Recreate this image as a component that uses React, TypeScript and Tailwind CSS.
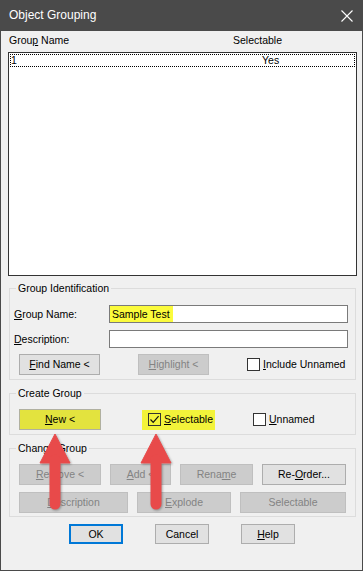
import React from 'react';

const Btn = ({ children, disabled, className = '' }: any) => (
  <div
    className={`h-[21px] flex items-center justify-center border ${
      disabled ? 'bg-[#cccccc] border-[#bfbfbf] text-[#838383]' : 'bg-[#e1e1e1] border-[#adadad] text-black'
    } ${className}`}
  >
    <span>{children}</span>
  </div>
);

const Box = ({ checked = false }: any) => (
  <span className={`w-[13px] h-[13px] border border-[#333333] flex items-center justify-center shrink-0 ${checked ? '' : 'bg-white'}`}>
    {checked && (
      <svg width="11" height="11" viewBox="0 0 11 11">
        <path d="M1.5 5.5 L4.2 8.3 L9.6 2.2" stroke="#111" strokeWidth="1.2" fill="none" />
      </svg>
    )}
  </span>
);

const GroupBox = ({ title, className = '', children }: any) => (
  <fieldset className={`ml-[8px] w-[347px] border border-[#dcdcdc] ${className}`}>
    <legend className="ml-[6px] px-[2px] leading-[13px]">{title}</legend>
    {children}
  </fieldset>
);

const U = ({ children }: any) => <span className="underline underline-offset-[1px]">{children}</span>;

export default function App() {
  return (
    <div className="relative w-[363px] h-[571px] overflow-hidden bg-[#f0f0f0] border-x border-b border-[#4a4a4a] font-['Liberation_Sans',Arial,sans-serif] text-[10.5px] leading-[13px] text-black">
      {/* title bar */}
      <div className="h-[31px] bg-[#4a4a4a] flex items-center justify-between pl-[8px] pr-[9px] text-white text-[12px]">
        <span>Object Grouping</span>
        <svg width="12" height="12" viewBox="0 0 12 12">
          <path d="M0.5 0.5 L11.5 11.5 M11.5 0.5 L0.5 11.5" stroke="#ffffff" strokeWidth="1.1" />
        </svg>
      </div>

      {/* list header */}
      <div className="mt-[3px] flex h-[13px]">
        <div className="w-[232px] pl-[8px]">Grou<U>p</U> Name</div>
        <div>Selectable</div>
      </div>

      {/* list */}
      <div className="ml-[7px] mt-[5px] w-[349px] h-[224px] border border-[#333333] bg-white">
        <div className="ml-[1px] mt-[1px] w-[345px] h-[13px] border border-dotted border-black flex items-center">
          <div className="w-[251px]">1</div>
          <div>Yes</div>
        </div>
      </div>

      <GroupBox title="Group Identification" className="mt-[6px] pb-[4px]">
        <div className="mt-[10px] flex items-center h-[18px]">
          <div className="w-[99px] pl-[4px]"><U>G</U>roup Name:</div>
          <div className="w-[239px] h-[18px] border border-[#7a7a7a] bg-white flex">
            <span className="h-full bg-[#fbfb3c] pl-[2px] pr-[3px] flex items-center">Sample Test</span>
          </div>
        </div>
        <div className="mt-[7px] flex items-center h-[18px]">
          <div className="w-[99px] pl-[4px]"><U>D</U>escription:</div>
          <div className="w-[239px] h-[18px] border border-[#7a7a7a] bg-white" />
        </div>
        <div className="mt-[6px] flex items-center">
          <Btn className="ml-[9px] w-[81px]"><U>F</U>ind Name &lt;</Btn>
          <Btn disabled className="ml-[38px] w-[71px]"><U>H</U>ighlight &lt;</Btn>
          <span className="ml-[38px]"><Box /></span>
          <span className="ml-[3px]"><U>I</U>nclude Unnamed</span>
        </div>
      </GroupBox>

      <GroupBox title="Create Group" className="mt-[7px] pb-[4px]">
        <div className="mt-[9px] flex items-center">
          <Btn className="ml-[9px] w-[82px] !bg-[#e3e33e] !border-[#b0b0a0]"><U>N</U>ew &lt;</Btn>
          <div className="ml-[41px] w-[73px] h-[20px] bg-[#f3f33a] flex items-center pl-[6px]">
            <Box checked />
            <span className="ml-[3px]"><U>S</U>electable</span>
          </div>
          <span className="ml-[38px]"><Box /></span>
          <span className="ml-[3px]"><U>U</U>nnamed</span>
        </div>
      </GroupBox>

      <GroupBox title="Change Group" className="mt-[7px] pb-[3px]">
        <div className="mt-[9px] flex">
          <Btn disabled className="ml-[9px] w-[82px]"><U>R</U>emove &lt;</Btn>
          <Btn disabled className="ml-[9px] w-[61px]"><U>A</U>dd &lt;</Btn>
          <Btn disabled className="ml-[9px] w-[73px]">Rena<U>m</U>e</Btn>
          <Btn className="ml-[9px] w-[84px]">Re-<U>O</U>rder...</Btn>
        </div>
        <div className="mt-[7px] flex">
          <Btn disabled className="ml-[9px] w-[109px]"><U>D</U>escription</Btn>
          <Btn disabled className="ml-[9px] w-[94px]"><U>E</U>xplode</Btn>
          <Btn disabled className="ml-[9px] w-[106px]">Selectable</Btn>
        </div>
      </GroupBox>

      <div className="mt-[7px] flex">
        <div className="ml-[68px] w-[54px] h-[20px] flex items-center justify-center bg-[#e1e1e1] border-2 border-[#0078d7]">OK</div>
        <Btn className="ml-[32px] w-[54px] !h-[20px]">Cancel</Btn>
        <Btn className="ml-[32px] w-[54px] !h-[20px]"><U>H</U>elp</Btn>
      </div>

      {/* annotation arrows */}
      <svg className="absolute left-0 top-0 pointer-events-none drop-shadow-[1px_1px_1px_rgba(0,0,0,0.3)]" width="361" height="570" viewBox="0 0 361 570">
        <g fill="#e84a4a" stroke="#e84a4a">
          <polygon points="39,463 54,434 69,463" strokeWidth="1" strokeLinejoin="round" />
          <line x1="54" y1="460" x2="54" y2="504" strokeWidth="11" strokeLinecap="round" />
          <polygon points="140,463 155,434 170,463" strokeWidth="1" strokeLinejoin="round" />
          <line x1="155" y1="460" x2="155" y2="504" strokeWidth="11" strokeLinecap="round" />
        </g>
      </svg>
    </div>
  );
}
